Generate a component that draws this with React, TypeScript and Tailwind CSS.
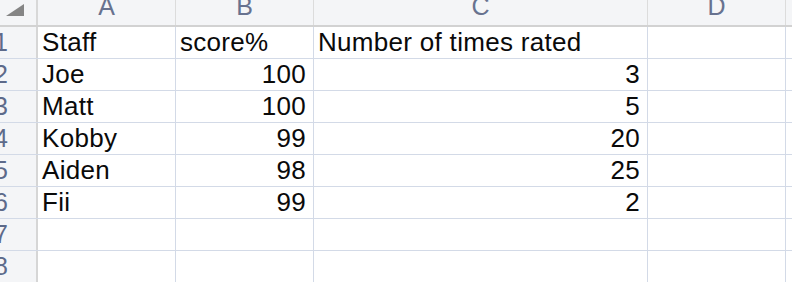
import React from 'react'

const font = { fontFamily: '"Liberation Sans", Arial, sans-serif' }

type Cell = string | number | null

const rows: Cell[][] = [
  ['Staff', 'score%', 'Number of times rated'],
  ['Joe', 100, 3],
  ['Matt', 100, 5],
  ['Kobby', 99, 20],
  ['Aiden', 98, 25],
  ['Fii', 99, 2],
  [null, null, null],
  [null, null, null],
]

function DataCell({ value, width }: { value: Cell; width: string }) {
  const isNum = typeof value === 'number'
  return (
    <div
      className={`${width} shrink-0 border-r border-[#d3dae7] px-[4px] pr-[7px] text-[26px] leading-[31px] tracking-[0.3px] text-[#0a0a0a] whitespace-nowrap overflow-hidden ${
        isNum ? 'text-right' : 'text-left'
      }`}
    >
      {value}
    </div>
  )
}

export default function App() {
  return (
    <div className="h-[282px] w-[792px] overflow-hidden bg-white" style={font}>
      {/* column header strip */}
      <div className="flex h-[27px] border-b-2 border-[#d2d2d2] bg-[#f4f5f7] text-[25px] leading-[12px] text-[#67728f]">
        <div className="flex w-[38px] shrink-0 items-end justify-end border-r-2 border-[#d8d8d8] pb-[9px] pr-[12px]">
          <svg width="18" height="12" viewBox="0 0 18 12">
            <polygon points="18,0 18,12 0,12" fill="#858585" />
          </svg>
        </div>
        <div className="w-[138px] shrink-0 border-r border-[#dcdcdc] text-center">A</div>
        <div className="w-[138px] shrink-0 border-r border-[#dcdcdc] text-center">B</div>
        <div className="w-[334px] shrink-0 border-r border-[#dcdcdc] text-center">C</div>
        <div className="w-[138px] shrink-0 border-r border-[#dcdcdc] text-center">D</div>
        <div className="flex-1" />
      </div>

      {rows.map((r, i) => (
        <div key={i} className="flex h-[32px] border-b border-[#d3dae7]">
          <div className="w-[38px] shrink-0 overflow-hidden border-r-2 border-[#d6d6d6] bg-[#f4f5f7]">
            <div className="-ml-[6px] text-[25px] leading-[31px] text-[#5d6a8a]">{i + 1}</div>
          </div>
          <DataCell value={r[0]} width="w-[138px]" />
          <DataCell value={r[1]} width="w-[138px]" />
          <DataCell value={r[2]} width="w-[334px]" />
          <DataCell value={null} width="w-[138px]" />
          <div className="flex-1" />
        </div>
      ))}
    </div>
  )
}
